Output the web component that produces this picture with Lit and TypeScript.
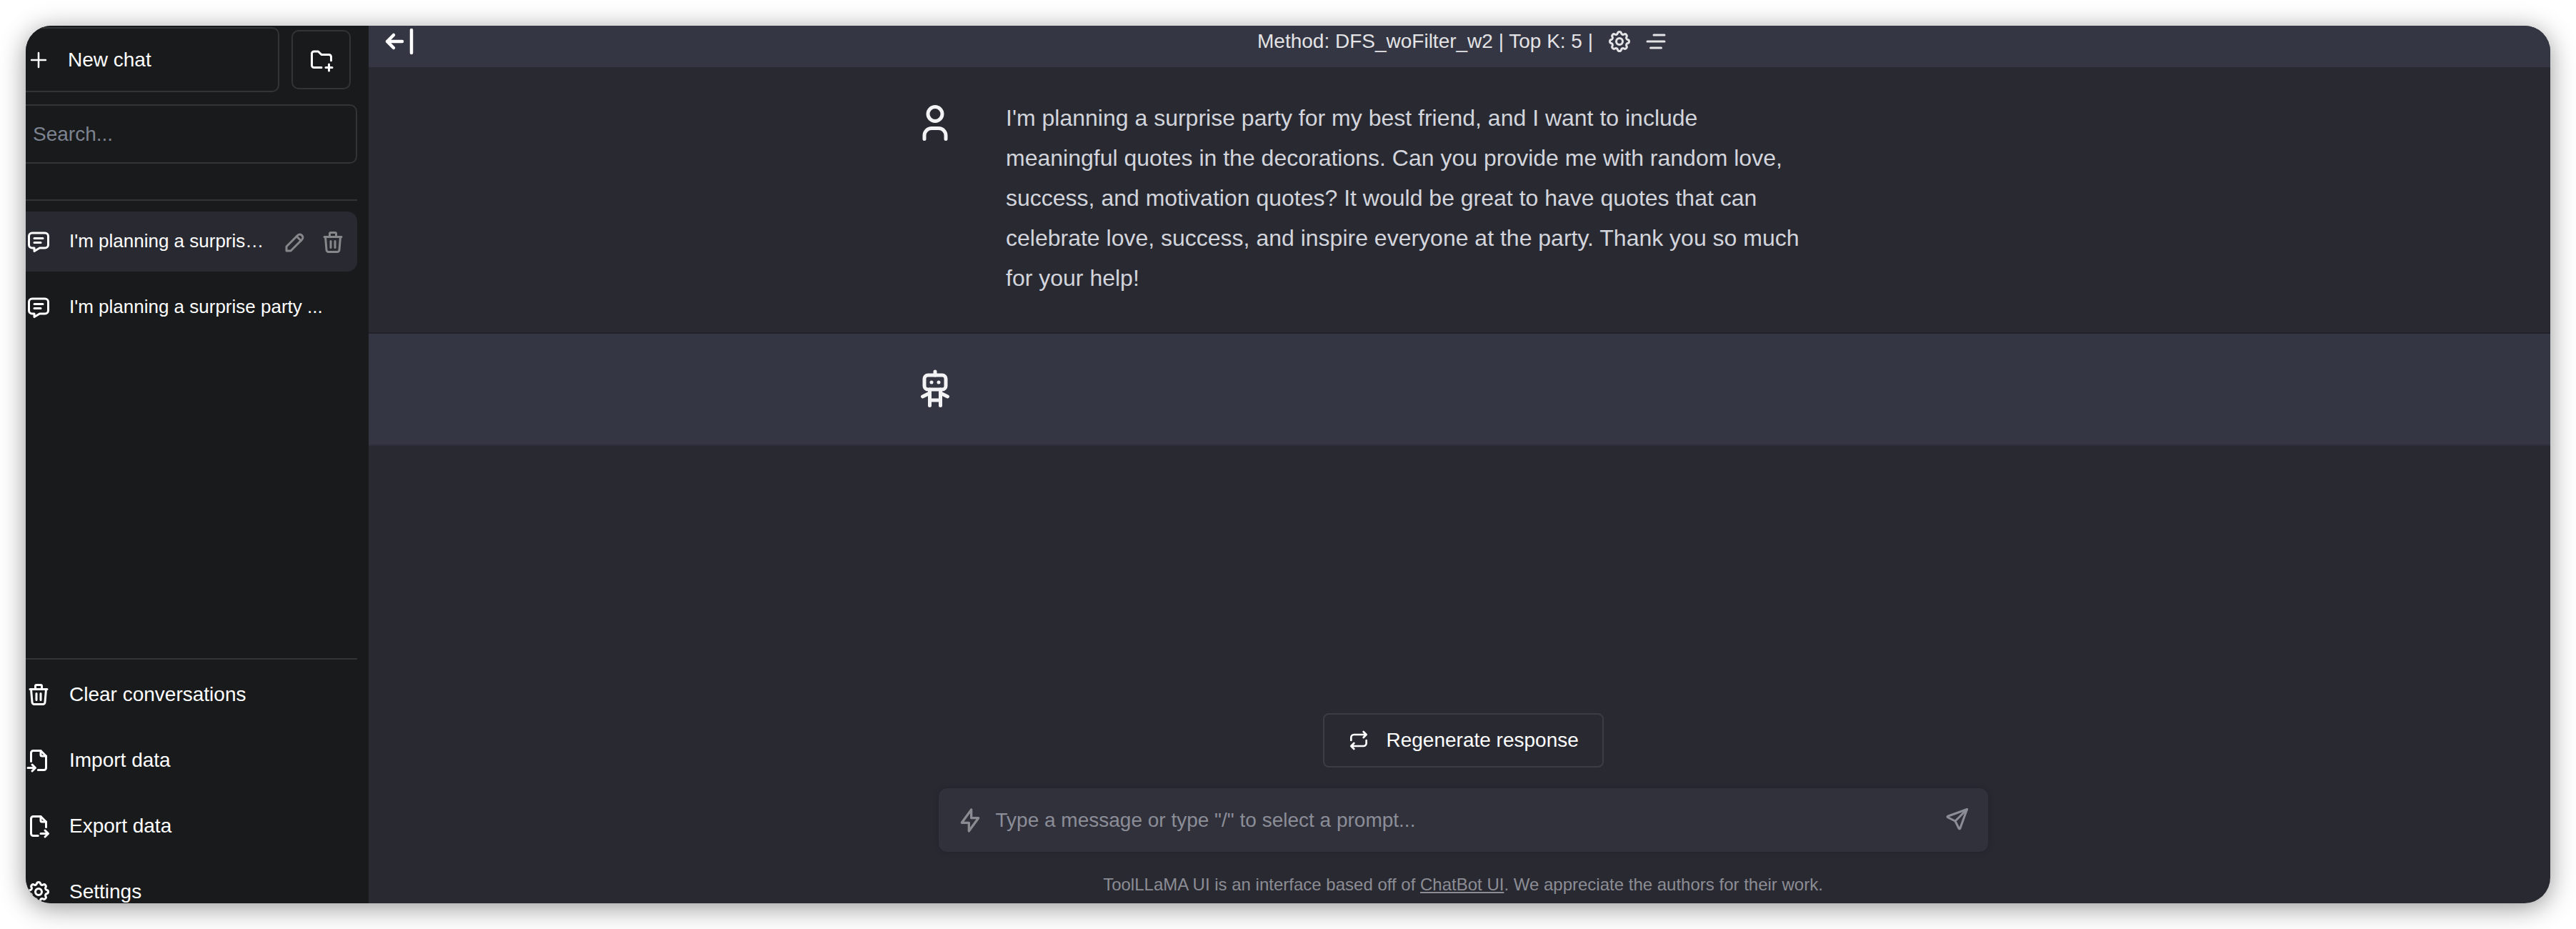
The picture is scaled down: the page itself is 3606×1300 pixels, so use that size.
import { LitElement, html, css, svg } from 'lit';
import { customElement } from 'lit/decorators.js';

const icon = (size: number, stroke: number, body: unknown) => html`
  <svg width=${size} height=${size} viewBox="0 0 24 24" fill="none" stroke="currentColor"
    stroke-width=${stroke} stroke-linecap="round" stroke-linejoin="round">${body}</svg>`;

const plus = svg`<path d="M12 5v14M5 12h14"/>`;
const folderPlus = svg`<path d="M12 19h-7a2 2 0 0 1-2-2V6a2 2 0 0 1 2-2h4l3 3h7a2 2 0 0 1 2 2v3.5"/><path d="M16 19h6M19 16v6"/>`;
const message = svg`<path d="M18 4a3 3 0 0 1 3 3v8a3 3 0 0 1-3 3h-5l-5 3v-3h-2a3 3 0 0 1-3-3V7a3 3 0 0 1 3-3h12z"/><path d="M8 9h8M8 13h6"/>`;
const pencil = svg`<path d="M4 20h4L18.5 9.5a2.83 2.83 0 0 0-4-4L4 16v4"/><path d="M13.5 6.5l4 4"/>`;
const trash = svg`<path d="M4 7h16M10 11v6M14 11v6"/><path d="M5 7l1 12a2 2 0 0 0 2 2h8a2 2 0 0 0 2-2l1-12"/><path d="M9 7V4a1 1 0 0 1 1-1h4a1 1 0 0 1 1 1v3"/>`;
const fileImport = svg`<path d="M14 3v4a1 1 0 0 0 1 1h4"/><path d="M5 13V5a2 2 0 0 1 2-2h7l5 5v11a2 2 0 0 1-2 2h-5.500M2 19h7m-3-3l3 3-3 3"/>`;
const fileExport = svg`<path d="M14 3v4a1 1 0 0 0 1 1h4"/><path d="M11.500 21H7a2 2 0 0 1-2-2V5a2 2 0 0 1 2-2h7l5 5v5m-5 6h7m-3-3l3 3-3 3"/>`;
const gear = svg`<path d="M10.325 4.317c.426-1.756 2.924-1.756 3.35 0a1.724 1.724 0 0 0 2.573 1.066c1.543-.94 3.31.826 2.37 2.37a1.724 1.724 0 0 0 1.065 2.572c1.756.426 1.756 2.924 0 3.35a1.724 1.724 0 0 0-1.066 2.573c.94 1.543-.826 3.31-2.37 2.37a1.724 1.724 0 0 0-2.572 1.065c-.426 1.756-2.924 1.756-3.35 0a1.724 1.724 0 0 0-2.573-1.066c-1.543.94-3.31-.826-2.37-2.37a1.724 1.724 0 0 0-1.065-2.572c-1.756-.426-1.756-2.924 0-3.35a1.724 1.724 0 0 0 1.066-2.573c-.94-1.543.826-3.31 2.37-2.37c1 .608 2.296.07 2.572-1.065z"/><circle cx="12" cy="12" r="3"/>`;
const menu = svg`<path d="M10 6h10M4 12h16M7 18h10"/>`;
const user = svg`<circle cx="12" cy="7" r="4"/><path d="M6 21v-2a4 4 0 0 1 4-4h4a4 4 0 0 1 4 4v2"/>`;
const robot = svg`<path d="M6 6a2 2 0 0 1 2-2h8a2 2 0 0 1 2 2v4a2 2 0 0 1-2 2H8a2 2 0 0 1-2-2z"/><path d="M12 2v2M9 12v9M15 12v9M5 16l4-2M15 14l4 2M9 18h6M10 8v.01M14 8v.01"/>`;
const repeat = svg`<path d="M4 12V9a3 3 0 0 1 3-3h13m-3-3l3 3-3 3"/><path d="M20 12v3a3 3 0 0 1-3 3H4m3 3l-3-3 3-3"/>`;
const bolt = svg`<path d="M13 3v7h6l-8 11v-7H5l8-11"/>`;
const send = svg`<path d="M10 14L21 3"/><path d="M21 3l-6.500 18a.55.55 0 0 1-1 0L10 14l-7-3.500a.55.55 0 0 1 0-1L21 3"/>`;

@customElement('app-root')
export class AppRoot extends LitElement {
  static styles = css`
    :host {
      display: block;
      width: 3606px;
      height: 1300px;
      padding: 36px;
      box-sizing: border-box;
      background: #fff;
      font-family: 'Liberation Sans', Arial, sans-serif;
      overflow: hidden;
    }

    svg {
      display: block;
      flex: none;
    }

    .window {
      display: flex;
      height: 1228px;
      border-radius: 36px;
      overflow: hidden;
      box-shadow: 0 6px 36px rgba(0, 0, 0, 0.42);
      background: #292932;
    }

    .sidebar {
      width: 480px;
      flex: none;
      display: flex;
      flex-direction: column;
      background: #191a1c;
      color: #fff;
      overflow: hidden;
    }

    .top {
      display: flex;
      align-items: center;
      gap: 17px;
      margin: 2px 25px 0 -40px;
    }

    .new-chat {
      flex: 1;
      height: 91px;
      box-sizing: border-box;
      display: flex;
      align-items: center;
      gap: 24px;
      padding-left: 39px;
      border: 2px solid #333436;
      border-radius: 10px;
      font-size: 28px;
    }

    .folder-btn {
      width: 83px;
      height: 83px;
      box-sizing: border-box;
      display: flex;
      align-items: center;
      justify-content: center;
      border: 2px solid #333436;
      border-radius: 10px;
    }

    .search {
      height: 83px;
      box-sizing: border-box;
      margin: 17px 16px 0 -40px;
      padding-left: 48px;
      display: flex;
      align-items: center;
      border: 2px solid #333436;
      border-radius: 10px;
      color: #7d8390;
      font-size: 28px;
    }

    .rule {
      height: 2px;
      flex: none;
      margin-right: 16px;
      background: #333436;
    }

    .rule.upper {
      margin-top: 50px;
    }

    .chats {
      flex: 1;
      min-height: 0;
      padding: 15px 16px 0 0;
    }

    .chat {
      height: 84px;
      display: flex;
      align-items: center;
      gap: 25px;
      padding: 0 16px 0 0;
      font-size: 26px;
      line-height: 30px;
      border-radius: 0 14px 14px 0;
      margin-bottom: 8px;
    }

    .chat.active {
      background: #292932;
    }

    .chat .name {
      flex: 1;
      min-width: 0;
      white-space: nowrap;
      overflow: hidden;
      text-overflow: ellipsis;
      margin-top: -2px;
    }

    .chat-actions {
      display: flex;
      gap: 17px;
      color: #87878b;
      margin-top: 2px;
    }

    .actions {
      flex: none;
      margin-bottom: -30px;
      padding-top: 3px;
    }

    .action {
      height: 92px;
      display: flex;
      align-items: center;
      gap: 25px;
      font-size: 28px;
    }

    .main {
      flex: 1;
      min-width: 0;
      display: flex;
      flex-direction: column;
    }

    .header {
      height: 58px;
      flex: none;
      box-sizing: border-box;
      padding-top: 2px;
      display: grid;
      grid-template-columns: 1fr auto 1fr;
      background: #343643;
      color: #e3e3e5;
      font-size: 28px;
    }

    .collapse {
      color: #fff;
      padding-left: 22px;
    }

    .header-info {
      display: flex;
      align-items: flex-start;
      margin-left: 10px;
      line-height: 40px;
    }

    .header-info svg {
      margin: 2px 0 0 19px;
    }

    .header-info svg + svg {
      margin-left: 15px;
    }

    .msg {
      flex: none;
      box-sizing: border-box;
      display: flex;
      justify-content: center;
      border-bottom: 2px solid #22222b;
    }

    .msg-inner {
      width: 1528px;
      display: flex;
      gap: 69px;
    }

    .msg.user {
      height: 373px;
      padding-top: 48px;
    }

    .msg.bot {
      height: 157px;
      padding-top: 48px;
      background: #343643;
      border-bottom-color: #2e2f3a;
    }

    .avatar {
      color: #f3f3f5;
    }

    .text {
      width: 1120px;
      margin-top: -5px;
      color: #d3d5dc;
      font-size: 32px;
      line-height: 56px;
    }

    .bottom {
      margin-top: auto;
      padding-left: 10px;
      display: flex;
      flex-direction: column;
      align-items: center;
    }

    .regen {
      width: 393px;
      height: 76px;
      box-sizing: border-box;
      display: flex;
      align-items: center;
      gap: 23px;
      padding-left: 32px;
      border: 2px solid #3c3c42;
      border-radius: 8px;
      color: #fff;
      background: #292932;
      font-size: 28px;
    }

    .input {
      width: 1469px;
      height: 89px;
      box-sizing: border-box;
      margin-top: 29px;
      padding: 0 24px;
      display: flex;
      align-items: center;
      border-radius: 12px;
      background: #31313c;
      color: #8b8d97;
      box-shadow: 0 0 8px rgba(0, 0, 0, 0.18);
      font-size: 28px;
    }

    .input .hint {
      flex: 1;
      margin-left: 16px;
    }

    .input .bolt {
      color: #8a8a90;
    }

    .input .send {
      margin: -4px 1px 0 0;
    }

    .footer {
      margin-top: 32px;
      height: 40px;
      color: #8c8d94;
      font-size: 24px;
      line-height: 28px;
    }

    .footer a {
      color: inherit;
      text-decoration: underline;
    }
  `;

  private chatRow(name: string, active: boolean) {
    return html`
      <div class="chat ${active ? 'active' : ''}">
        ${icon(36, 2, message)}
        <div class="name">${name}</div>
        ${active
          ? html`<div class="chat-actions">${icon(36, 2, pencil)}${icon(36, 2, trash)}</div>`
          : null}
      </div>
    `;
  }

  render() {
    return html`
      <div class="window">
        <aside class="sidebar">
          <div class="top">
            <div class="new-chat">${icon(34, 1.8, plus)}<span>New chat</span></div>
            <div class="folder-btn">${icon(36, 2, folderPlus)}</div>
          </div>
          <div class="search">Search...</div>
          <div class="rule upper"></div>
          <div class="chats">
            ${this.chatRow("I'm planning a surprise party for my best friend", true)}
            ${this.chatRow("I'm planning a surprise party ...", false)}
          </div>
          <div class="rule"></div>
          <div class="actions">
            <div class="action">${icon(36, 2, trash)}<span>Clear conversations</span></div>
            <div class="action">${icon(36, 2, fileImport)}<span>Import data</span></div>
            <div class="action">${icon(36, 2, fileExport)}<span>Export data</span></div>
            <div class="action">${icon(36, 2, gear)}<span>Settings</span></div>
          </div>
        </aside>
        <main class="main">
          <div class="header">
            <div class="collapse">
              <svg width="44" height="40" viewBox="0 0 44 40" fill="none" stroke="currentColor"
                stroke-width="4.500" stroke-linecap="round" stroke-linejoin="round">
                <path d="M4 20h21M4 20l9-9M4 20l9 9M38 4v32"/>
              </svg>
            </div>
            <div class="header-info">
              <span>Method: DFS_woFilter_w2 | Top K: 5 |</span>
              ${icon(36, 2, gear)}${icon(36, 2, menu)}
            </div>
            <div></div>
          </div>
          <div class="msg user">
            <div class="msg-inner">
              <div class="avatar">${icon(60, 2, user)}</div>
              <div class="text">I'm planning a surprise party for my best friend, and I want to include meaningful quotes in the decorations. Can you provide me with random love, success, and motivation quotes? It would be great to have quotes that can celebrate love, success, and inspire everyone at the party. Thank you so much for your help!</div>
            </div>
          </div>
          <div class="msg bot">
            <div class="msg-inner">
              <div class="avatar">${icon(60, 2, robot)}</div>
            </div>
          </div>
          <div class="bottom">
            <div class="regen">${icon(32, 2, repeat)}<span>Regenerate response</span></div>
            <div class="input">
              <span class="bolt">${icon(40, 2, bolt)}</span>
              <span class="hint">Type a message or type "/" to select a prompt...</span>
              <span class="send">${icon(36, 2, send)}</span>
            </div>
            <div class="footer">ToolLLaMA UI is an interface based off of <a>ChatBot UI</a>. We appreciate the authors for their work.</div>
          </div>
        </main>
      </div>
    `;
  }
}
